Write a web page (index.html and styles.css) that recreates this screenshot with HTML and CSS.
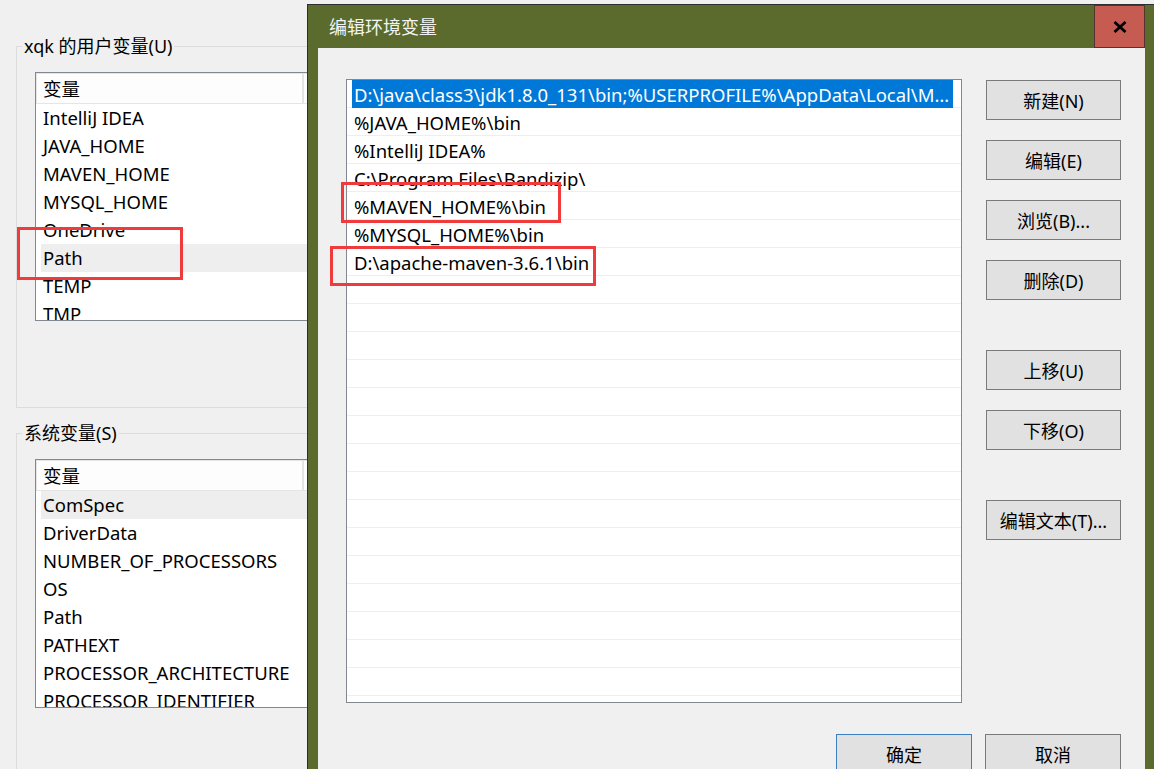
FILE: index.html
```html
<!DOCTYPE html>
<html lang="zh-CN">
<head>
  <meta charset="UTF-8">
  <title>编辑环境变量</title>
  <link rel="stylesheet" href="styles.css">
</head>
<body>
<div class="screen">

  <div class="behind">
    <fieldset class="group user-group">
      <legend>xqk 的用户变量(U)</legend>
      <div class="varlist">
        <div class="var-head">
          <span class="head-cell head-name">变量</span>
          <span class="head-cell"></span>
        </div>
        <div class="var-rows">
          <div class="var-row">IntelliJ IDEA</div>
          <div class="var-row">JAVA_HOME</div>
          <div class="var-row">MAVEN_HOME</div>
          <div class="var-row">MYSQL_HOME</div>
          <div class="var-row">OneDrive</div>
          <div class="var-row hovered">Path</div>
          <div class="var-row">TEMP</div>
          <div class="var-row">TMP</div>
        </div>
        <span class="mark mark-path"></span>
      </div>
    </fieldset>

    <fieldset class="group sys-group">
      <legend>系统变量(S)</legend>
      <div class="varlist">
        <div class="var-head">
          <span class="head-cell head-name">变量</span>
          <span class="head-cell"></span>
        </div>
        <div class="var-rows">
          <div class="var-row hovered">ComSpec</div>
          <div class="var-row">DriverData</div>
          <div class="var-row">NUMBER_OF_PROCESSORS</div>
          <div class="var-row">OS</div>
          <div class="var-row">Path</div>
          <div class="var-row">PATHEXT</div>
          <div class="var-row">PROCESSOR_ARCHITECTURE</div>
          <div class="var-row">PROCESSOR_IDENTIFIER</div>
        </div>
      </div>
    </fieldset>
  </div>

  <div class="dialog">
    <div class="titlebar">
      <span class="title">编辑环境变量</span>
      <button class="close-btn" title="关闭">
        <svg width="14" height="12" viewBox="0 0 14 12">
          <path d="M1.5 1 L12.5 11 M12.5 1 L1.5 11" stroke="#000" stroke-width="2.8" fill="none"/>
        </svg>
      </button>
    </div>

    <div class="client">
      <div class="main-row">
        <div class="pathlist">
          <div class="path-row selected"><span class="path-text">D:\java\class3\jdk1.8.0_131\bin;%USERPROFILE%\AppData\Local\Microsoft\WindowsApps;</span></div>
          <div class="path-row"><span class="path-text">%JAVA_HOME%\bin</span></div>
          <div class="path-row"><span class="path-text">%IntelliJ IDEA%</span></div>
          <div class="path-row"><span class="path-text">C:\Program Files\Bandizip\</span></div>
          <div class="path-row"><span class="path-text">%MAVEN_HOME%\bin</span></div>
          <div class="path-row"><span class="path-text">%MYSQL_HOME%\bin</span></div>
          <div class="path-row"><span class="path-text">D:\apache-maven-3.6.1\bin</span></div>
          <span class="mark mark-maven"></span>
          <span class="mark mark-apache"></span>
        </div>

        <div class="side-buttons">
          <button class="btn">新建(N)</button>
          <button class="btn">编辑(E)</button>
          <button class="btn">浏览(B)...</button>
          <button class="btn">删除(D)</button>
          <button class="btn btn-spaced">上移(U)</button>
          <button class="btn">下移(O)</button>
          <button class="btn btn-spaced">编辑文本(T)...</button>
        </div>
      </div>

      <div class="footer-buttons">
        <button class="btn btn-wide btn-default">确定</button>
        <button class="btn btn-wide">取消</button>
      </div>
    </div>
  </div>

</div>
</body>
</html>
```

FILE: styles.css
```css
html, body {
  margin: 0;
  padding: 0;
}

body {
  width: 1154px;
  height: 769px;
  overflow: hidden;
  background-color: #f0f0f0;
  color: #000000;
  font-family: "Noto Sans", "Noto Sans CJK SC", sans-serif;
  font-size: 18.5px;
}

.screen {
  display: flex;
  height: 769px;
}

/* window behind the dialog */

.behind {
  width: 307px;
  flex-shrink: 0;
  overflow: hidden;
}

.group {
  width: 420px;
  margin: 0 0 0 16px;
  padding: 0 0 86px 5px;
  border: 1px solid #dcdcdc;
  border-right: none;
  min-width: 0;
}

.group legend {
  padding: 0 2px;
  line-height: 24px;
  font-size: 18px;
}

.user-group {
  margin-top: 34px;
}

.sys-group {
  margin-top: 13px;
  padding-bottom: 200px;
}

.varlist {
  position: relative;
  width: 360px;
  height: 249px;
  margin: 14px 0 0 13px;
  border: 1px solid #828790;
  background: #ffffff;
  box-sizing: border-box;
}

.var-head {
  display: flex;
  height: 31px;
  border-bottom: 1px solid #e5e5e5;
  box-sizing: border-box;
}

.head-cell {
  height: 30px;
  line-height: 30px;
  border: 1px solid #e5e5e5;
  border-bottom: none;
  background: #fdfdfd;
  box-sizing: border-box;
  flex: 1;
}

.head-name {
  flex: 0 0 267px;
  padding-left: 6px;
}

.var-rows {
  height: 216px;
  overflow: hidden;
}

.var-row {
  height: 28px;
  line-height: 28px;
  margin-left: 5px;
  padding-left: 2px;
  white-space: nowrap;
}

.var-row.hovered {
  background: #eeeeee;
}

.mark {
  position: absolute;
  border: 3px solid #ef3b3b;
  box-sizing: border-box;
}

.mark-path {
  left: -19px;
  top: 154px;
  width: 166px;
  height: 53px;
}

/* dialog */

.dialog {
  width: 847px;
  flex-shrink: 0;
  margin-top: 4px;
  border: 1px solid #2e2e2e;
  border-bottom: none;
  background: #5a6b2d;
  display: flex;
  flex-direction: column;
}

.titlebar {
  display: flex;
  align-items: center;
  justify-content: space-between;
  height: 43px;
}

.title {
  padding-left: 21px;
  color: #f4f4f4;
  font-size: 18px;
  line-height: 24px;
}

.close-btn {
  width: 51px;
  height: 43px;
  margin-right: 10px;
  padding: 0;
  border: 1px solid #56342e;
  background: #c65b51;
  display: flex;
  align-items: center;
  justify-content: center;
}

.close-btn svg {
  display: block;
}

.client {
  flex: 1;
  margin: 0 10px;
  padding: 31px 22px 0 28px;
  background: #f0f0f0;
}

.main-row {
  display: flex;
  gap: 24px;
}

.pathlist {
  position: relative;
  width: 616px;
  height: 624px;
  border: 1px solid #828790;
  box-sizing: border-box;
  background-color: #ffffff;
  background-image: repeating-linear-gradient(to bottom, #ffffff 0, #ffffff 27px, #eeeeee 27px, #eeeeee 28px);
}

.path-row {
  height: 28px;
  padding: 0 8px 0 5px;
}

.path-text {
  display: block;
  height: 28px;
  line-height: 29px;
  padding-left: 2px;
  white-space: nowrap;
  overflow: hidden;
  text-overflow: ellipsis;
}

.path-row.selected .path-text {
  background: #0078d7;
  color: #ffffff;
}

.mark-maven {
  left: -6px;
  top: 102px;
  width: 220px;
  height: 41px;
}

.mark-apache {
  left: -17px;
  top: 166px;
  width: 266px;
  height: 40px;
}

.side-buttons {
  display: flex;
  flex-direction: column;
  gap: 20px;
  padding-top: 1px;
}

.btn {
  width: 135px;
  height: 40px;
  padding: 0;
  border: 1px solid #7a7a7a;
  background: #e1e1e1;
  color: #000000;
  font-family: "Noto Sans", "Noto Sans CJK SC", sans-serif;
  font-size: 18px;
  box-sizing: border-box;
}

.btn-spaced {
  margin-top: 30px;
}

.btn-wide {
  width: 136px;
}

.btn-default {
  border-color: #3b7fc0;
}

.footer-buttons {
  display: flex;
  justify-content: flex-end;
  gap: 13px;
  margin-top: 31px;
  margin-right: 2px;
}
```
